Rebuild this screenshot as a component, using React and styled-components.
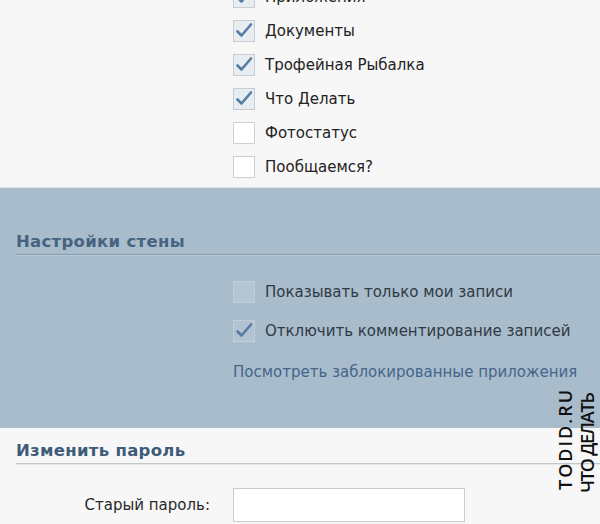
import React from 'react';
import styled, { createGlobalStyle } from 'styled-components';

const Global = createGlobalStyle`
  html, body { margin: 0; padding: 0; background: #f7f7f7; }
  body { font-family: "DejaVu Sans", Verdana, sans-serif; overflow: hidden; }
`;

const Page = styled.div`
  position: relative;
  width: 600px;
  height: 524px;
  overflow: hidden;
  background: #f7f7f7;
  color: #222;
  font-size: 15px;
`;

const TopSection = styled.section`
  margin-top: -20px;
  padding: 0 0 3px 233px;
`;

const Row = styled.label`
  display: flex;
  align-items: center;
  gap: 10px;
  height: ${p => p.$h || 34}px;
  line-height: 20px;
  color: ${p => (p.$onBand ? '#2f3a45' : '#222')};
  white-space: nowrap;
`;

const Box = styled.span`
  box-sizing: border-box;
  flex: none;
  width: 22px;
  height: 22px;
  border: 1px solid ${p => (p.$onBand ? '#c2ceda' : p.$checked ? '#c5ccd4' : '#cfd0d2')};
  background: ${p => (p.$onBand ? (p.$checked ? '#b2c2d0' : '#b5c5d3') : p.$checked ? '#e8edf2' : '#ffffff')};
  display: flex;
  align-items: center;
  justify-content: center;
`;

const Band = styled.section`
  height: 241px;
  box-sizing: border-box;
  background: #a9bccc;
  border-top: 1px solid #d9e1e8;
  padding-top: 44px;
`;

const Heading = styled.h2`
  margin: 0 0 0 16px;
  padding-bottom: 2px;
  font-size: 16.5px;
  letter-spacing: 0.3px;
  line-height: 20px;
  font-weight: bold;
  color: ${p => (p.$onBand ? '#46637f' : '#3e5b78')};
  border-bottom: 1px solid ${p => (p.$onBand ? '#8c9dae' : '#c4c8cc')};
  box-shadow: 0 1px 0 ${p => (p.$onBand ? '#b9c8d5' : '#e6e8ea')};
`;

const BandRows = styled.div`
  padding: 17px 0 0 233px;
`;

const Link = styled.a`
  display: block;
  margin-top: 12px;
  line-height: 20px;
  color: #44668a;
  text-decoration: none;
  white-space: nowrap;
`;

const Bottom = styled.section`
  padding-top: 13px;
`;

const FormGrid = styled.div`
  display: grid;
  grid-template-columns: 210px 232px;
  column-gap: 23px;
  align-items: center;
  margin-top: 24px;
`;

const Label = styled.span`
  text-align: right;
  color: #2a2a2a;
`;

const Input = styled.input`
  box-sizing: border-box;
  width: 232px;
  height: 34px;
  border: 1px solid #c9cccf;
  background: #fff;
  outline: none;
`;

const Watermark = styled.div`
  position: absolute;
  left: 511px;
  top: 421px;
  width: 130px;
  height: 44px;
  transform: rotate(-90deg);
  text-align: center;
  font-family: "Open Sans", "DejaVu Sans", sans-serif;
  font-weight: 600;
  font-size: 18px;
  line-height: 22px;
  color: #111;
  white-space: nowrap;
`;

const WLine = styled.div`
  letter-spacing: ${p => p.$ls}px;
  transform: translateX(${p => p.$dx || 0}px);
`;

const Check = () => (
  <svg width="20" height="20" viewBox="0 0 20 20">
    <path d="M3.5 10.5 L7.5 14.5 L17 3.5" fill="none" stroke="#567ca2" strokeWidth="2.6" strokeLinecap="round" strokeLinejoin="round" />
  </svg>
);

const CheckRow = ({ checked, onBand, h, children }) => (
  <Row $onBand={onBand} $h={h}>
    <Box $checked={checked} $onBand={onBand}>{checked && <Check />}</Box>
    <span>{children}</span>
  </Row>
);

const apps = [
  ['Приложения', true],
  ['Документы', true],
  ['Трофейная Рыбалка', true],
  ['Что Делать', true],
  ['Фотостатус', false],
  ['Пообщаемся?', false],
];

export default function App() {
  return (
    <Page>
      <Global />
      <TopSection>
        {apps.map(([t, c]) => (
          <CheckRow key={t} checked={c}>{t}</CheckRow>
        ))}
      </TopSection>
      <Band>
        <Heading $onBand>Настройки стены</Heading>
        <BandRows>
          <CheckRow onBand h={39}>Показывать только мои записи</CheckRow>
          <CheckRow onBand checked h={39}>Отключить комментирование записей</CheckRow>
          <Link href="#">Посмотреть заблокированные приложения</Link>
        </BandRows>
      </Band>
      <Bottom>
        <Heading>Изменить пароль</Heading>
        <FormGrid>
          <Label>Старый пароль:</Label>
          <Input type="password" />
        </FormGrid>
      </Bottom>
      <Watermark>
        <WLine $ls={2} $dx={4}>TODID.RU</WLine>
        <WLine $ls={-1.2}>ЧТО ДЕЛАТЬ</WLine>
      </Watermark>
    </Page>
  );
}
